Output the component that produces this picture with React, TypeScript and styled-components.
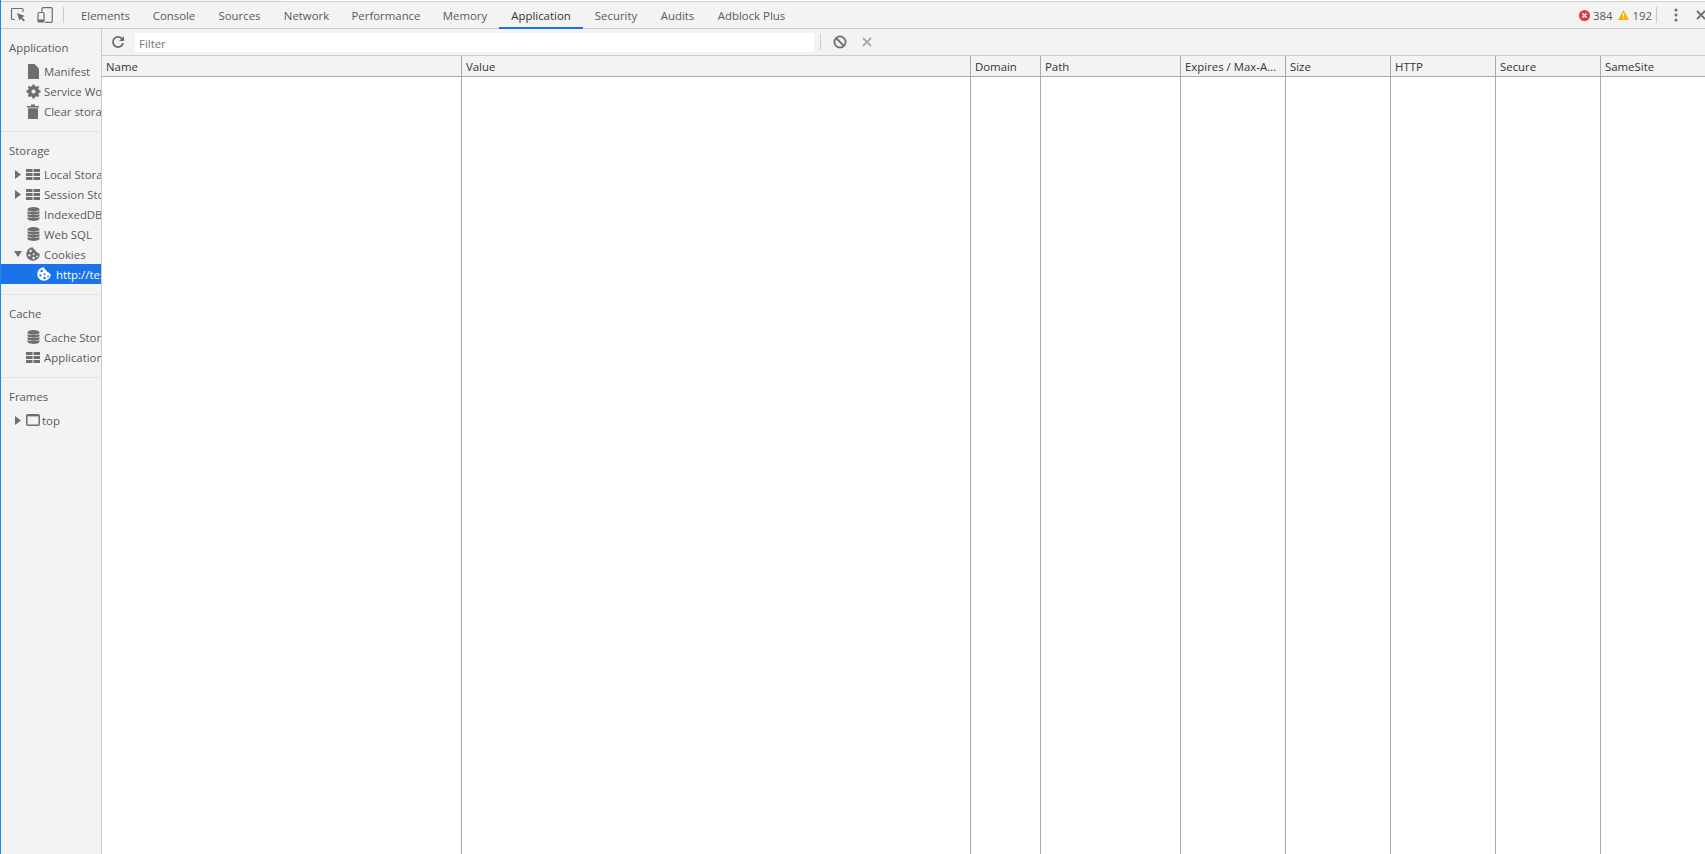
import React from "react";
import styled, { createGlobalStyle } from "styled-components";

const Global = createGlobalStyle`
  html, body { margin: 0; padding: 0; height: 100%; overflow: hidden; background: #fff; }
  #root { height: 100%; }
  * { box-sizing: border-box; }
`;

const Page = styled.div`
  height: 854px;
  width: 1705px;
  display: flex;
  flex-direction: column;
  border-left: 1px solid #1a8ae8;
  font-family: "Open Sans", "Noto Sans", sans-serif;
  font-size: 11.4px;
  color: #5a5a5a;
  background: #fff;
  overflow: hidden;
`;
const TopEdge = styled.div`
  height: 2px;
  flex: none;
  border-bottom: 1px solid #cfcfcf;
  background: linear-gradient(to right, #f3f3f3 281px, #fff 281px);
`;
const TabBar = styled.div`
  height: 27px;
  flex: none;
  display: flex;
  align-items: stretch;
  background: #f3f3f3;
  border-bottom: 1px solid #ccc;
`;
const ToolIcons = styled.div`
  width: 69px;
  flex: none;
  display: flex;
  align-items: center;
  padding-left: 9px;
  gap: 11px;
`;
const VSep = styled.div`
  width: 1px;
  height: 16px;
  background: #ccc;
  flex: none;
`;
const ToolSep = styled(VSep)`
  margin-left: -1px;
`;
const Tab = styled.div<{ $w: number; $active?: boolean }>`
  width: ${(p) => p.$w}px;
  flex: none;
  display: flex;
  align-items: center;
  justify-content: center;
  white-space: nowrap;
  margin-bottom: -1px;
  color: ${(p) => (p.$active ? "#333" : "#5a5a5a")};
  border-bottom: 2px solid ${(p) => (p.$active ? "#1a73e8" : "transparent")};
  padding-top: 1px;
`;
const Status = styled.div`
  margin-left: auto;
  display: flex;
  align-items: center;
  white-space: nowrap;
`;
const Count = styled.span`
  margin: 0 4px 0 3px;
`;
const IconSlot = styled.div<{ $ml?: number }>`
  display: flex;
  align-items: center;
  margin-left: ${(p) => p.$ml ?? 0}px;
`;
const Body = styled.div`
  flex: 1;
  min-height: 0;
  display: flex;
`;
const Sidebar = styled.nav`
  width: 101px;
  flex: none;
  background: #f3f3f3;
  border-right: 1px solid #ccc;
  overflow: hidden;
  padding-top: 9px;
`;
const Section = styled.section`
  padding-bottom: 10px;
  margin-bottom: 9px;
  border-bottom: 1px solid #e4e4e4;
  &:last-child { border-bottom: none; }
`;
const SectionHead = styled.div`
  height: 20px;
  line-height: 20px;
  padding-left: 8px;
  margin-bottom: 3px;
  white-space: nowrap;
`;
const Row = styled.div<{ $selected?: boolean; $indent?: number }>`
  height: 20px;
  display: flex;
  align-items: center;
  padding-left: ${(p) => p.$indent ?? 11}px;
  white-space: nowrap;
  background: ${(p) => (p.$selected ? "#1a73e8" : "transparent")};
  color: ${(p) => (p.$selected ? "#fff" : "#5a5a5a")};
`;
const Arrow = styled.div`
  width: 13px;
  flex: none;
  display: flex;
  align-items: center;
  justify-content: center;
  padding-right: 2px;
`;
const RowIcon = styled.div<{ $gap?: number }>`
  width: 16px;
  flex: none;
  display: flex;
  justify-content: center;
  margin-right: ${(p) => p.$gap ?? 3}px;
`;
const Main = styled.main`
  flex: 1;
  min-width: 0;
  display: flex;
  flex-direction: column;
`;
const Toolbar = styled.div`
  height: 27px;
  flex: none;
  display: flex;
  align-items: center;
  background: #f3f3f3;
  border-bottom: 1px solid #ccc;
  padding-left: 9px;
`;
const FilterInput = styled.div`
  width: 679px;
  height: 19px;
  margin: 0 6px 0 10px;
  background: #fff;
  color: #757575;
  padding-left: 4px;
  line-height: 21px;
`;
const Table = styled.div`
  flex: 1;
  min-height: 0;
  display: flex;
  background: #fff;
  overflow: hidden;
`;
const Column = styled.div<{ $w: number }>`
  width: ${(p) => p.$w}px;
  flex: none;
  display: flex;
  flex-direction: column;
  & + & { border-left: 1px solid #aaa; }
`;
const HeadCell = styled.div`
  height: 21px;
  flex: none;
  background: #f3f3f3;
  border-bottom: 1px solid #aaa;
  color: #333;
  padding: 0 7px 0 4px;
  line-height: 22px;
  white-space: nowrap;
  overflow: hidden;
  text-overflow: ellipsis;
`;

const G = "#6e6e6e";

const Pick = () => (
  <svg width="16" height="16" viewBox="0 0 16 16">
    <path d="M5 12.500H2.500a1 1 0 0 1-1-1v-9a1 1 0 0 1 1-1h9.500a1 1 0 0 1 1 1V5" fill="none" stroke={G} strokeWidth="1.200" />
    <path d="M7 6l8 3-3 1.200 3 3-1.400 1.400-3-3L9.500 14z" fill={G} />
  </svg>
);
const Device = () => (
  <svg width="16" height="16" viewBox="0 0 16 16">
    <path d="M5 4.800V1.700a1 1 0 0 1 1-1h8.300a1 1 0 0 1 1 1v12.600a1 1 0 0 1-1 1H8" fill="none" stroke={G} strokeWidth="1.200" />
    <rect x="1" y="5.500" width="6" height="9.500" rx="1" fill="none" stroke={G} strokeWidth="1.200" />
    <rect x="1" y="12.500" width="6" height="2.500" fill={G} />
  </svg>
);
const ErrorIcon = () => (
  <svg width="11" height="11" viewBox="0 0 11 11">
    <circle cx="5.500" cy="5.500" r="5.500" fill="#e0393e" />
    <path d="M3.500 3.500l4 4M7.500 3.500l-4 4" stroke="#fff" strokeWidth="1.500" />
  </svg>
);
const WarnIcon = () => (
  <svg width="11" height="10" viewBox="0 0 11 10">
    <path d="M5.500 0L11 10H0z" fill="#f4b400" />
    <path d="M5.500 3v3.600M5.500 7.600v1.200" stroke="#fff" strokeWidth="1.200" />
  </svg>
);
const Dots = () => (
  <svg width="4" height="14" viewBox="0 0 4 14">
    <circle cx="2" cy="2" r="1.500" fill={G} />
    <circle cx="2" cy="7" r="1.500" fill={G} />
    <circle cx="2" cy="12" r="1.500" fill={G} />
  </svg>
);
const CloseIcon = ({ color = G }: { color?: string }) => (
  <svg width="10" height="10" viewBox="0 0 10 10" style={{ flex: "none" }}>
    <path d="M1 1l8 8M9 1L1 9" stroke={color} strokeWidth="1.800" />
  </svg>
);
const Reload = () => (
  <svg width="14" height="14" viewBox="0 0 14 14">
    <path d="M11.300 4.200A5.100 5.100 0 1 0 12 8" fill="none" stroke={G} strokeWidth="1.800" />
    <path d="M13 1v5H8z" fill={G} />
  </svg>
);
const Block = () => (
  <svg width="14" height="14" viewBox="0 0 14 14">
    <circle cx="7" cy="7" r="5.600" fill="none" stroke={G} strokeWidth="1.800" />
    <path d="M3 3l8 8" stroke={G} strokeWidth="1.800" />
  </svg>
);
const Right = () => (
  <svg width="6" height="9" viewBox="0 0 6 9"><path d="M0 0l6 4.500L0 9z" fill={G} /></svg>
);
const Down = () => (
  <svg width="8" height="6" viewBox="0 0 8 6"><path d="M0 0h8L4 6z" fill={G} /></svg>
);
const Doc = () => (
  <svg width="11" height="15" viewBox="0 0 11 15"><path d="M0 0h6.500L11 4.500V15H0z" fill={G} /></svg>
);
const Gear = () => (
  <svg width="15" height="15" viewBox="0 0 15 15">
    <g stroke={G} strokeWidth="2.400">
      <path d="M7.500 0.500v14M0.500 7.500h14M2.500 2.500l10 10M12.500 2.500l-10 10" />
    </g>
    <circle cx="7.500" cy="7.500" r="4.400" fill="none" stroke={G} strokeWidth="2.600" />
    <circle cx="7.500" cy="7.500" r="2" fill="#f3f3f3" />
  </svg>
);
const Trash = () => (
  <svg width="12" height="15" viewBox="0 0 12 15">
    <path d="M0 2h12v1.400H0zM4 .5h4V2H4z" fill={G} />
    <path d="M1 4.200h10V14a1 1 0 0 1-1 1H2a1 1 0 0 1-1-1z" fill={G} />
  </svg>
);
const Grid = () => (
  <svg width="14" height="11" viewBox="0 0 14 11" fill={G}>
    <rect x="0" y="0" width="6.500" height="3" />
    <rect x="7.500" y="0" width="6.500" height="3" />
    <rect x="0" y="4" width="6.500" height="3" />
    <rect x="7.500" y="4" width="6.500" height="3" />
    <rect x="0" y="8" width="6.500" height="3" />
    <rect x="7.500" y="8" width="6.500" height="3" />
  </svg>
);
const Db = () => (
  <svg width="13" height="14" viewBox="0 0 13 14" fill={G}>
    <ellipse cx="6.500" cy="2.400" rx="6" ry="2.300" />
    <path d="M.5 3.900C1.500 5.400 11.500 5.400 12.500 3.900v1.800c0 2.600-12 2.600-12 0z" />
    <path d="M.5 6.900C1.500 8.400 11.500 8.400 12.500 6.900v1.800c0 2.600-12 2.600-12 0z" />
    <path d="M.5 9.900C1.500 11.400 11.500 11.400 12.500 9.900v1.600c0 3.200-12 3.200-12 0z" />
  </svg>
);
const Cookie = ({ fg = G, bg = "#f3f3f3" }: { fg?: string; bg?: string }) => (
  <svg width="14" height="14" viewBox="0 0 14 14">
    <path d="M7 .2a6.800 6.800 0 1 0 6.800 6.800c-1-.1-1.700-.7-1.900-1.600-1.200 0-2.200-.8-2.300-2C8.500 3.100 7.300 1.800 7 .2z" fill={fg} />
    <circle cx="4.600" cy="4" r="1.200" fill={bg} />
    <circle cx="3.400" cy="8.400" r="1.100" fill={bg} />
    <circle cx="7.600" cy="7.200" r="1" fill={bg} />
    <circle cx="7.600" cy="11" r="1.200" fill={bg} />
    <circle cx="11" cy="9.400" r=".9" fill={bg} />
  </svg>
);
const FrameIcon = () => (
  <svg width="14" height="12" viewBox="0 0 14 12">
    <rect x=".8" y=".8" width="12.400" height="10.400" rx="1.200" fill="none" stroke={G} strokeWidth="1.500" />
    <rect x=".8" y=".8" width="12.400" height="1.600" fill={G} />
  </svg>
);

const tabs: [string, number][] = [
  ["Elements", 71], ["Console", 66], ["Sources", 65], ["Network", 69], ["Performance", 90],
  ["Memory", 68], ["Application", 84], ["Security", 66], ["Audits", 57], ["Adblock Plus", 91],
];
const columns: [string, number][] = [
  ["Name", 359], ["Value", 509], ["Domain", 70], ["Path", 140], ["Expires / Max-Age", 105],
  ["Size", 105], ["HTTP", 105], ["Secure", 105], ["SameSite", 105],
];

type ItemProps = { arrow?: "right" | "down"; icon: React.ReactNode; label: string; gap?: number };
const Item = ({ arrow, icon, label, gap }: ItemProps) => (
  <Row>
    <Arrow>{arrow === "right" ? <Right /> : arrow === "down" ? <Down /> : null}</Arrow>
    <RowIcon $gap={gap}>{icon}</RowIcon>
    {label}
  </Row>
);

export default function App() {
  return (
    <Page>
      <Global />
      <TopEdge />
      <TabBar>
        <ToolIcons>
          <Pick />
          <Device />
          <ToolSep />
        </ToolIcons>
        {tabs.map(([t, w]) => (
          <Tab key={t} $w={w} $active={t === "Application"}>{t}</Tab>
        ))}
        <Status>
          <ErrorIcon />
          <Count>384</Count>
          <IconSlot $ml={2}><WarnIcon /></IconSlot>
          <Count>192</Count>
          <VSep />
          <IconSlot $ml={17}><Dots /></IconSlot>
          <IconSlot $ml={18}><CloseIcon /></IconSlot>
          <IconSlot $ml={-1} />
        </Status>
      </TabBar>
      <Body>
        <Sidebar>
          <Section>
            <SectionHead>Application</SectionHead>
            <Item icon={<Doc />} label="Manifest" />
            <Item icon={<Gear />} label="Service Workers" />
            <Item icon={<Trash />} label="Clear storage" />
          </Section>
          <Section>
            <SectionHead>Storage</SectionHead>
            <Item arrow="right" icon={<Grid />} label="Local Storage" />
            <Item arrow="right" icon={<Grid />} label="Session Storage" />
            <Item icon={<Db />} label="IndexedDB" />
            <Item icon={<Db />} label="Web SQL" />
            <Item arrow="down" icon={<Cookie />} label="Cookies" />
            <Row $selected $indent={35}>
              <RowIcon $gap={4}><Cookie fg="#fff" bg="#1a73e8" /></RowIcon>
              http://test.example
            </Row>
          </Section>
          <Section>
            <SectionHead>Cache</SectionHead>
            <Item icon={<Db />} label="Cache Storage" />
            <Item icon={<Grid />} label="Application Cache" />
          </Section>
          <Section>
            <SectionHead>Frames</SectionHead>
            <Item arrow="right" icon={<FrameIcon />} label="top" gap={1} />
          </Section>
        </Sidebar>
        <Main>
          <Toolbar>
            <Reload />
            <FilterInput>Filter</FilterInput>
            <VSep />
            <IconSlot $ml={12}><Block /></IconSlot>
            <IconSlot $ml={15}><CloseIcon color="#aaa" /></IconSlot>
          </Toolbar>
          <Table>
            {columns.map(([c, w]) => (
              <Column key={c} $w={w}>
                <HeadCell>{c}</HeadCell>
              </Column>
            ))}
          </Table>
        </Main>
      </Body>
    </Page>
  );
}
